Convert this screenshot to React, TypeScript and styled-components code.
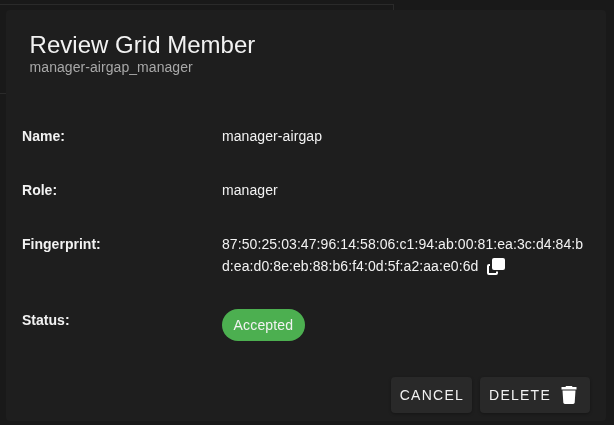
import React from 'react';
import styled, { createGlobalStyle } from 'styled-components';

const GlobalStyle = createGlobalStyle`
  html, body {
    margin: 0;
    height: 100%;
    background: #191919;
    overflow: hidden;
  }
  #root {
    height: 100%;
  }
`;

const Page = styled.div`
  position: relative;
  width: 614px;
  height: 425px;
  background: #191919;
  font-family: "Liberation Sans", Arial, sans-serif;
  overflow: hidden;
`;

const BackdropCard = styled.div`
  width: 394px;
  height: 90px;
  margin-top: 4px;
  border-top: 1px solid #2a2a2a;
  border-right: 1px solid #2a2a2a;
  border-bottom: 1px solid #2a2a2a;
  box-sizing: border-box;
`;

const Dialog = styled.div`
  position: absolute;
  left: 6px;
  top: 10px;
  width: 600px;
  height: 411px;
  display: flex;
  flex-direction: column;
  box-sizing: border-box;
  background: #1e1e1e;
  border-radius: 4px;
  color: #f2f2f2;
  will-change: transform;
`;

const Header = styled.div`
  padding: 21px 23.6px 0;
  height: 99px;
  box-sizing: border-box;
`;

const Title = styled.h2`
  margin: 0;
  font-size: 24px;
  font-weight: 400;
  line-height: 28px;
  letter-spacing: 0.02px;
`;

const Subtitle = styled.div`
  font-size: 14px;
  line-height: 16px;
  letter-spacing: 0.06px;
  color: #a8a8a8;
`;

const Rows = styled.div`
  display: flex;
  flex-direction: column;
  padding: 0 16px;
`;

const Row = styled.div`
  display: grid;
  grid-template-columns: 200px 1fr;
  padding: 17px 0;
  font-size: 14px;
  line-height: 20px;
`;

const Label = styled.div`
  font-weight: 700;
  letter-spacing: 0.02px;
`;

const Value = styled.div`
  width: 364px;
  word-break: break-all;
  letter-spacing: 0.085px;
`;

const Fingerprint = styled(Value)`
  line-height: 22px;
  margin-top: -1px;
  margin-bottom: 1px;
`;

const CopyButton = styled.span`
  display: inline-flex;
  vertical-align: -5px;
  margin-left: 8px;
`;

const Chip = styled.span`
  display: inline-flex;
  align-items: center;
  height: 32px;
  padding: 0 12px 0 11.6px;
  border-radius: 16px;
  background: #4caf50;
  font-size: 14px;
  letter-spacing: 0.15px;
`;

const StatusRow = styled(Row)`
  margin-top: -1px;
  padding-top: 15px;
`;

const StatusLabel = styled(Label)`
  margin-top: 1px;
`;

const Actions = styled.div`
  margin-top: auto;
  display: flex;
  justify-content: flex-end;
  gap: 8px;
  padding: 0 16px 8px;
`;

const Button = styled.button<{ $tight?: boolean }>`
  display: inline-flex;
  align-items: center;
  height: 36px;
  padding: 0 ${({ $tight }) => ($tight ? '8px' : '9px')} 0 9px;
  border: 0;
  border-radius: 4px;
  background: #292929;
  color: #f2f2f2;
  font-family: inherit;
  font-size: 14px;
  letter-spacing: 1.25px;
  box-shadow: 0 1px 3px rgba(0, 0, 0, 0.3);
`;

const TrashSlot = styled.span`
  display: inline-flex;
  margin-left: 6px;
`;

const rows = [
  { label: 'Name:', value: 'manager-airgap' },
  { label: 'Role:', value: 'manager' },
];

export default function App() {
  return (
    <Page>
      <GlobalStyle />
      <BackdropCard />
      <Dialog>
        <Header>
          <Title>Review Grid Member</Title>
          <Subtitle>manager-airgap_manager</Subtitle>
        </Header>
        <Rows>
          {rows.map((row) => (
            <Row key={row.label}>
              <Label>{row.label}</Label>
              <Value>{row.value}</Value>
            </Row>
          ))}
          <Row>
            <Label>Fingerprint:</Label>
            <Fingerprint>
              87:50:25:03:47:96:14:58:06:c1:94:ab:00:81:ea:3c:d4:84:bd:ea:d0:8e:eb:88:b6:f4:0d:5f:a2:aa:e0:6d
              <CopyButton>
                <svg width="20" height="20" viewBox="0 0 20 20" fill="#fff">
                  <rect x="6" y="2" width="13" height="12" rx="2" />
                  <path d="M4 8H3a2 2 0 0 0-2 2v7a2 2 0 0 0 2 2h7a2 2 0 0 0 2-2v-1.500h-2V17H3v-7h1z" />
                </svg>
              </CopyButton>
            </Fingerprint>
          </Row>
          <StatusRow>
            <StatusLabel>Status:</StatusLabel>
            <div>
              <Chip>Accepted</Chip>
            </div>
          </StatusRow>
        </Rows>
        <Actions>
          <Button $tight>CANCEL</Button>
          <Button>
            DELETE
            <TrashSlot>
              <svg width="24" height="24" viewBox="0 0 24 24" fill="#fff">
                <path d="M9 3 8.500 4H4.500v2.500h15V4h-4L15 3zM5.500 7.500l.8 12.100c.1.800.7 1.400 1.500 1.400h8.400c.8 0 1.400-.6 1.500-1.400l.8-12.100z" />
              </svg>
            </TrashSlot>
          </Button>
        </Actions>
      </Dialog>
    </Page>
  );
}
